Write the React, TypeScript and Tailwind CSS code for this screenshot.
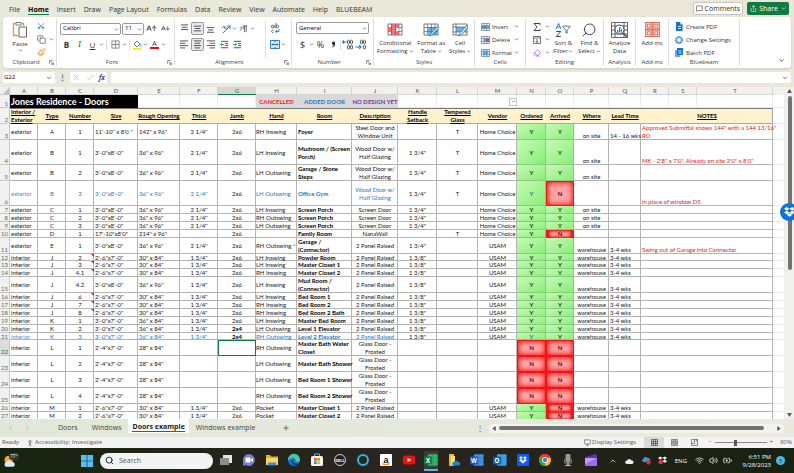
import React, { useState } from 'react';
import {
  AArrowDown, AArrowUp, BatteryCharging, Check, ChevronDown, ChevronLeft, ChevronRight, ChevronUp,
  Copy, Eraser, Funnel, MessageSquare, Monitor, Paintbrush, PersonStanding, Plus, Scissors,
  Search, Share, Volume2, Wifi, X,
} from 'lucide-react';

interface DoorRow {
  n: number;
  size: 'sm' | 'xs' | 'md' | 'lg';
  area: string;
  type: string;
  num: string;
  dim: string;
  opening: string;
  thick: string;
  jamb: string;
  hand: string;
  room: string;
  desc: string;
  setback: string;
  glass: string;
  vendor: string;
  ordered: string;
  arrived: string;
  where: string;
  lead: string;
  notes: string;
  added?: boolean;
  comment?: boolean;
}

const row = (n: number, size: DoorRow['size'], cells: string, flags: Partial<DoorRow> = {}): DoorRow => {
  const [area, type, num, dim, opening, thick, jamb, hand, room, desc, setback, glass, vendor, ordered, arrived, where, lead, notes] = cells.split('|');
  return { n, size, area, type, num, dim, opening, thick, jamb, hand, room, desc, setback, glass, vendor, ordered, arrived, where, lead, notes, ...flags };
};

const rows: DoorRow[] = [
  row(3, 'md', `exterior|A|1|11'-10" x 8'0 "|142" x 96"|2 1/4"|2x6|RH Inswing|Foyer|Steel Door and\nWindow Unit||T|Home Choice|Y|Y|on site|14 - 16 wks|Approved Submittal shows 144" with a 144 13/16"\nRO`),
  row(4, 'lg', `exterior|B|1|3'-0"x8'-0"|36" x 96"|2 1/4"|2x6|LH Inswing|Mudroom / (Screen\nPorch)|Wood Door w/\nHalf Glazing|1 3/4"|T|Home Choice|Y|Y|on site||MK - 2'8" x 7'0", Already on site 3'0" x 8'0"`),
  row(5, 'md', `exterior|B|2|3'-0"x8'-0"|36" x 96"|2 1/4"|2x6|LH Outswing|Garage / Stone\nSteps|Wood Door w/\nHalf Glazing|1 3/4"|T|Home Choice|Y|Y|on site||`),
  row(6, 'lg', `exterior|B|3|3'-0"x8'-0"|36" x 96"|2 1/4"|2x6|LH Outswing|Office Gym|Wood Door w/\nHalf Glazing|1 3/4"|T|Home Choice|Y|N|||in place of window D5`, { added: true }),
  row(7, 'sm', `exterior|C|1|3'-0"x8'-0"|36" x 96"|2 1/4"|2x6|LH Inswing|Screen Porch|Screen Door|1 3/4"||Home Choice|Y|Y|on site||`),
  row(8, 'sm', `exterior|C|2|3'-0"x8'-0"|36" x 96"|2 1/4"|2x6|RH Outswing|Screen Porch|Screen Door|1 3/4"||Home Choice|Y|Y|on site||`),
  row(9, 'sm', `exterior|C|3|3'-0"x8'-0"|36" x 96"|2 1/4"|2x6|LH Outswing|Screen Porch|Screen Door|1 3/4"||Home Choice|Y|Y|on site||`),
  row(10, 'sm', `exterior|D|1|17'-10"x8'0"|214" x 96"||2x6||Family Room|NanaWall||T|Home Choice|Y|N|||`),
  row(11, 'md', `exterior|E|1|3'-0"x8'-0"|36" x 96"|2 1/4"|2x6|RH Outswing|Garage /\n(Connector)|2 Panel Raised|1 3/4"||USAM|Y|Y|warehouse|3-4 wks|Swing out of Garage into Connector`),
  row(12, 'xs', `interior|J|2|2'-6"x7'-0"|30" x 84"|1 3/4"|2x6|LH Inswing|Powder Room|2 Panel Raised|1 3/8"||USAM|Y|Y|warehouse|3-4 wks|`, { comment: true }),
  row(13, 'sm', `interior|J|3|2'-6"x7'-0"|30" x 84"|1 3/4"|2x6|LH Inswing|Master Closet 1|2 Panel Raised|1 3/8"||USAM|Y|Y|warehouse|3-4 wks|`, { comment: true }),
  row(14, 'sm', `interior|J|4.1|2'-6"x7'-0"|30" x 84"|1 3/4"|2x6|RH Inswing|Master Closet 2|2 Panel Raised|1 3/8"||USAM|Y|Y|warehouse|3-4 wks|`, { comment: true }),
  row(15, 'md', `interior|J|4.2|3'-0"x8'-0"|36" x 96"|1 3/4"|2x6|LH Inswing|Mud Room /\n(Connector)|2 Panel Raised|1 3/8"||USAM|Y|Y|warehouse|3-4 wks|`),
  row(16, 'sm', `interior|J|6|2'-6"x7'-0"|30" x 84"|1 3/4"|2x6|LH Inswing|Bed Room 1|2 Panel Raised|1 3/8"||USAM|Y|Y|warehouse|3-4 wks|`, { comment: true }),
  row(17, 'sm', `interior|J|7|2'-6"x7'-0"|30" x 84"|1 3/4"|2x6|RH Inswing|Bed Room 2|2 Panel Raised|1 3/8"||USAM|Y|Y|warehouse|3-4 wks|`, { comment: true }),
  row(18, 'sm', `interior|J|8|2'-6"x7'-0"|30" x 84"|1 3/4"|2x6|RH Inswing|Bed Room 2 Bath|2 Panel Raised|1 3/8"||USAM|Y|Y|warehouse|3-4 wks|`, { comment: true }),
  row(19, 'sm', `interior|K|1|3'-0"x7'-0"|36" x 84"|1 3/4"|2x6|LH Inswing|Master Bed Room|2 Panel Raised|1 3/8"||USAM|Y|Y|warehouse|3-4 wks|`),
  row(20, 'sm', `interior|K|2|3'-0"x7'-0"|36" x 84"|1 3/4"|2x4|LH Outswing|Level 1 Elevator|2 Panel Raised|1 3/8"||USAM|Y|Y|warehouse|3-4 wks|`),
  row(21, 'xs', `interior|K|3|3'-0"x7'-0"|36" x 84"|1 3/4"|2x4|RH Outswing|Level 2 Elevator|2 Panel Raised|1 3/8"||USAM|Y|Y|warehouse|3-4 wks|`, { added: true }),
  row(22, 'md', `interior|L|1|2'-4"x7'-0"|28" x 84"|||RH Outswing|Master Bath Water\nCloset|Glass Door -\nFrosted||||N|N|||`),
  row(23, 'md', `interior|L|2|2'-4"x7'-0"|28" x 84"|||LH Outswing|Master Bath Shower|Glass Door -\nFrosted||||N|N|||`),
  row(24, 'md', `interior|L|3|2'-4"x7'-0"|28" x 84"|||LH Outswing|Bed Room 1 Shower|Glass Door -\nFrosted||||N|N|||`),
  row(25, 'md', `interior|L|4|2'-4"x7'-0"|28" x 84"|||RH Outswing|Bed Room 2 Shower|Glass Door -\nFrosted||||N|N|||`),
  row(26, 'sm', `interior|M|1|2'-6"x7'-0"|30" x 84"|1 3/4"|2x6|Pocket|Master Closet 1|2 Panel Raised|||USAM|Y|N|warehouse|3-4 wks|`),
  row(27, 'sm', `interior|M|2|2'-6"x7'-0"|30" x 84"|1 3/4"|2x6|Pocket|Master Closet 2|2 Panel Raised|||USAM|Y|N|warehouse|3-4 wks|`),
];

const rowSize = {
  xs: 'h-[7px] leading-[7px]',
  sm: 'h-[8px] leading-[8px]',
  md: 'h-[16px] leading-[8px]',
  lg: 'h-[25px] leading-[8px]',
};

const columns: [string, string][] = [
  ['A', 'w-[28px]'], ['B', 'w-[28px]'], ['C', 'w-[28px]'], ['D', 'w-[44px]'], ['E', 'w-[42px]'],
  ['F', 'w-[38px]'], ['G', 'w-[38px]'], ['H', 'w-[41px]'], ['I', 'w-[55px]'], ['J', 'w-[46px]'],
  ['K', 'w-[39px]'], ['L', 'w-[41px]'], ['M', 'w-[39px]'], ['N', 'w-[29px]'], ['O', 'w-[28px]'],
  ['P', 'w-[35px]'], ['Q', 'w-[32px]'], ['R', 'w-[28px]'], ['S', 'w-[28px]'], ['T', 'w-[76px]'],
];

const headings = [
  'Interior /\nExterior', 'Type', 'Number', 'Size', 'Rough Opening', 'Thick', 'Jamb', 'Hand', 'Room', 'Description',
  'Handle\nSetback', 'Tempered\nGlass', 'Vendor', 'Ordered', 'Arrived', 'Where', 'Lead Time',
];

const line = 'shadow-[inset_-1px_-1px_0_#b4b4b4]';
const faint = 'shadow-[inset_-1px_-1px_0_#ececec]';

const Chev = ({ className = '' }: { className?: string }) => (
  <ChevronDown className={`w-[5px] h-[5px] shrink-0 ${className || 'text-gray-700'}`} strokeWidth={3} />
);

const Tool = ({ label, className = '', children }: { label: string; className?: string; children: React.ReactNode }) => (
  <button aria-label={label} className={`flex items-center justify-center shrink-0 h-[13px] w-[13px] rounded-[2px] ${className}`}>
    {children}
  </button>
);

const Picker = ({ label, value, width }: { label: string; value: string; width: string }) => (
  <div className="relative flex">
    <select aria-label={label} className={`appearance-none h-[12px] pl-[2px] text-[6px] leading-[9px] bg-white border border-[#9a9a9a] rounded-[2px] ${width}`}>
      <option>{value}</option>
    </select>
    <ChevronDown className="absolute right-[2px] top-[4px] w-[5px] h-[5px] text-gray-700 pointer-events-none" strokeWidth={3} />
  </div>
);

const Lines = ({ widths, y = 2 }: { widths: number[][]; y?: number }) => (
  <svg viewBox="0 0 10 10" className="w-[9px] h-[9px]" stroke="#444" strokeWidth="1">
    {widths.map(([a, b], i) => <line key={i} x1={a} x2={b} y1={y + i * 2.6} y2={y + i * 2.6} />)}
  </svg>
);

interface GroupProps {
  title: string;
  className: string;
  launcher?: boolean;
  children: React.ReactNode;
}

const Group = ({ title, className, launcher, children }: GroupProps) => (
  <section aria-label={title} className={`flex flex-col shrink-0 border-r border-[#dedede] my-[2px] ${className}`}>
    <div className="flex h-[39px] pt-[2px]">{children}</div>
    <div className="flex items-center h-[8px] text-[6px] leading-[8px] text-[#444]">
      <span className="flex-1 text-center whitespace-nowrap">{title}</span>
      {launcher && (
        <svg viewBox="0 0 8 8" className="w-[5px] h-[5px] mr-[2px]" fill="none" stroke="#444">
          <path d="M1 6V1H6M3 3L7 7M7 4V7H4" />
        </svg>
      )}
    </div>
  </section>
);

const BigButton = ({ icon, a, b, chevron = true }: { icon: React.ReactNode; a: string; b?: string; chevron?: boolean }) => (
  <button className="flex flex-col items-center flex-auto text-[6px] leading-[8px] text-[#333] whitespace-nowrap">
    <span className="flex items-center justify-center h-[17px] mb-[1px]">{icon}</span>
    <span>{a}</span>
    <span className="flex items-center gap-px">{b}{chevron && <Chev />}</span>
  </button>
);

const GridGlyph = ({ red }: { red?: boolean }) => (
  <svg viewBox="0 0 16 14" className="w-[16px] h-[14px]">
    <path d="M1 1H15V12H1Z" fill="#fff" stroke="#555" strokeWidth=".8" />
    {red ? (
      <g fill="#f2707a"><path d="M4 1H12V4H4ZM1 5H9V8H1ZM4 9H12V12H4Z" /></g>
    ) : (
      <path d="M5 4H15V12H5Z" fill="#6bb3ec" />
    )}
    <path d="M1 4.5H15M1 8.5H15M4.5 1V12M8.5 1V12M12 1V12" stroke="#555" strokeWidth=".6" />
    {!red && <path d="M14.5 3L8 10.5L6 13L9 12L15.5 5Z" fill="#cfe6fa" stroke="#2b78b8" strokeWidth=".8" />}
  </svg>
);

const CellStyleGlyph = () => (
  <svg viewBox="0 0 16 14" className="w-[16px] h-[14px]">
    <path d="M1 1H15V12H1Z" fill="#fff" stroke="#555" strokeWidth=".8" />
    <path d="M4 4H15V9H4Z" fill="#6bb3ec" />
    <path d="M1 4H15M1 9H15M4 1V12" stroke="#555" strokeWidth=".7" />
    <path d="M15 2L8.500 9.500L6.500 13L10 11.500L16 4Z" fill="#cfe6fa" stroke="#2b78b8" strokeWidth=".8" />
  </svg>
);

const CellGlyph = ({ kind }: { kind: string }) => (
  <svg viewBox="0 0 10 9" className="w-[9px] h-[8px]">
    <path d="M.5 .5H9.5V8.5H.5ZM.5 3H9.5M.5 6H9.5M3.5 .5V8.5M6.5 .5V8.5" fill="#fff" stroke="#4a6478" strokeWidth=".7" />
    <path d={kind === 'Format' ? 'M2 2H8V7H2Z' : 'M3 3H9V6H3Z'} fill="#55a5e4" />
    {kind === 'Delete' && <path d="M5.5 3L9 6.5M9 3L5.5 6.5" stroke="#d63838" strokeWidth="1.2" />}
    {kind === 'Insert' && <path d="M6 4.5H1M2.6 3L1 4.5L2.6 6" fill="none" stroke="#1668a8" strokeWidth=".9" />}
  </svg>
);

const Indent = ({ flip }: { flip?: boolean }) => (
  <svg viewBox="0 0 10 10" className="w-[9px] h-[9px]" fill="none">
    <path d="M1 1.5H9M5.5 4H9M5.5 6.2H9M1 8.6H9" stroke="#444" />
    <path d={flip ? 'M0 5H4M2.5 3.5L4 5L2.5 6.5' : 'M4.5 5H.5M2 3.5L.5 5L2 6.5'} stroke="#1a7fd0" />
  </svg>
);

// Rounded zeros with an arrow, shared by both decimal buttons
const Decimals = ({ less }: { less?: boolean }) => (
  <svg viewBox="0 0 11 11" className="w-[11px] h-[11px]" fill="none" stroke="#444" strokeWidth=".9">
    <ellipse cx="6.500" cy="3" rx="1.100" ry="1.900" />
    <ellipse cx="9.500" cy="3" rx="1.100" ry="1.900" />
    <ellipse cx="9.500" cy="8.200" rx="1.100" ry="1.900" />
    {!less && <ellipse cx="6.500" cy="8.200" rx="1.100" ry="1.900" />}
    <path d={less ? 'M.5 8H6M4.200 6.200L6 8L4.200 9.800' : 'M4.500 3H.5M2 1.500L.5 3L2 4.500'} stroke="#1a7fd0" strokeWidth="1.100" />
  </svg>
);

const DropboxMark = ({ className }: { className: string }) => (
  <svg viewBox="0 0 24 22" className={className} fill="#fff">
    <path d="M6 0L12 4L6 8L0 4ZM18 0L24 4L18 8L12 4ZM6 8L12 12L6 16L0 12ZM18 8L24 12L18 16L12 12ZM6 17.3L12 13.3L18 17.3L12 21.3Z" />
  </svg>
);

const menu = ['File', 'Home', 'Insert', 'Draw', 'Page Layout', 'Formulas', 'Data', 'Review', 'View', 'Automate', 'Help', 'BLUEBEAM'];

const MenuBar = () => (
  <header className="flex items-center h-[17px] shrink-0 pl-[9px] pr-[5px]">
    <nav className="flex gap-[8px] text-[7px] leading-[9px] text-[#333]">
      {menu.map(m => (
        <button key={m} className={`whitespace-nowrap border-b-[1px] mt-[3px] ${m === 'Home' ? 'font-bold border-[#107c41] text-black' : 'border-transparent'}`}>{m}</button>
      ))}
    </nav>
    <div className="flex gap-[4px] ml-auto text-[7px] leading-[9px]">
      <button className="flex items-center gap-[2px] h-[13px] px-[2px] rounded-[2px] bg-white border border-[#c8c6bd] text-[#333]">
        <MessageSquare className="w-[7px] h-[7px]" /> Comments
      </button>
      <button className="flex items-center gap-[2px] h-[13px] px-[3px] rounded-[2px] bg-[#107c41] text-white">
        <Share className="w-[7px] h-[7px]" /> Share <Chev className="text-white ml-px" />
      </button>
    </div>
  </header>
);

const Ribbon = () => (
  <div className="flex h-[51px] shrink-0 mx-[3px] bg-white rounded-[4px] shadow-sm overflow-hidden">
    <Group title="Clipboard" className="w-[54px]" launcher>
      <button className="flex flex-col items-center w-[34px] text-[6px] leading-[8px] text-[#333]">
        <svg viewBox="0 0 16 17" className="w-[16px] h-[17px]" fill="none">
          <path d="M3.5 2.5H1.5V14.5H6M9.5 2.5H11.5V5" stroke="#e79a3c" strokeWidth="1.4" />
          <path d="M4 1.5H9V4H4Z" fill="#fff" stroke="#666" strokeWidth=".8" />
          <path d="M7 6H14.5V16H7Z" fill="#fff" stroke="#666" strokeWidth="1" />
        </svg>
        <span className="mt-[2px]">Paste</span>
        <Chev />
      </button>
      <div className="flex flex-col justify-between items-start py-px">
        <button aria-label="Cut"><Scissors className="w-[8px] h-[8px] text-[#2f7ab8] -rotate-90" /></button>
        <button aria-label="Copy" className="flex items-center gap-[3px]"><Copy className="w-[9px] h-[9px] text-[#555]" /><Chev /></button>
        <button aria-label="Format Painter"><Paintbrush className="w-[9px] h-[9px] text-[#d9822b]" /></button>
      </div>
    </Group>

    <Group title="Font" className="w-[118px]" launcher>
      <div className="flex flex-col gap-[3px] px-[3px] pt-px">
        <div className="flex items-center gap-px">
          <Picker label="Font name" value="Calibri" width="w-[61px]" />
          <Picker label="Font size" value="11" width="w-[22px]" />
          <Tool label="Increase Font Size"><AArrowUp className="w-[11px] h-[11px] text-[#444]" /></Tool>
          <Tool label="Decrease Font Size"><AArrowDown className="w-[9px] h-[9px] text-[#444]" /></Tool>
        </div>
        <div className="flex items-center text-[8px] text-[#333]">
          <Tool label="Bold" className="font-bold">B</Tool>
          <Tool label="Italic" className="font-serif italic">I</Tool>
          <Tool label="Underline" className="underline">U</Tool>
          <Chev />
          <span className="w-px h-[11px] bg-[#dedede] mx-[2px]" />
          <Tool label="Borders">
            <svg viewBox="0 0 10 10" className="w-[9px] h-[9px]"><path d="M1 1H9V9H1ZM5 1V9M1 5H9" fill="none" stroke="#777" strokeWidth=".9" /></svg>
          </Tool>
          <Chev />
          <span className="w-px h-[11px] bg-[#dedede] ml-[2px]" />
          <Tool label="Fill Color">
            <svg viewBox="0 0 10 10" className="w-[10px] h-[10px]"><path d="M2 4L5 1L8 4L5 7Z" fill="#fff" stroke="#555" strokeWidth=".8" /><path d="M8 4Q9.5 6 8.6 6.6" stroke="#1a7fd0" fill="none" /><path d="M1 8H9V10H1Z" fill="#ffee00" /></svg>
          </Tool>
          <Chev />
          <Tool label="Font Color"><span className="text-[7px] leading-[7px] border-b-2 border-[#e01010] px-[2px]">A</span></Tool>
          <Chev />
        </div>
      </div>
    </Group>

    <Group title="Alignment" className="w-[117px]" launcher>
      <div className="flex flex-col gap-[3px] pl-[3px] pt-px">
        <div className="flex items-center">
          <Tool label="Top Align"><Lines widths={[[1, 9], [2, 8], [1, 9]]} y={1} /></Tool>
          <Tool label="Middle Align" className="bg-[#eaeaea] border border-[#9a9a9a]"><Lines widths={[[1, 9], [2, 8], [1, 9]]} y={2.4} /></Tool>
          <Tool label="Bottom Align"><Lines widths={[[1, 9], [2, 8], [1, 9]]} y={4} /></Tool>
          <Tool label="Orientation" className="ml-[2px]">
            <svg viewBox="0 0 10 10" className="w-[10px] h-[10px]" fill="none"><path d="M2 9L9 2M9 5V2H6" stroke="#1a7fd0" /><path d="M1 4L3 2L4 5M4.5 2.5L6 5" stroke="#555" strokeWidth=".8" /></svg>
          </Tool>
          <Chev />
          <Tool label="Text Direction">
            <svg viewBox="0 0 10 10" className="w-[9px] h-[9px]" fill="none"><path d="M1 3L3.5 5L1 7" stroke="#1a7fd0" /><path d="M6 9V2H9M8 2V9M6 5Q4 5 4.5 3T6 2" stroke="#444" strokeWidth=".9" /></svg>
          </Tool>
          <Chev />
        </div>
        <div className="flex items-center">
          <Tool label="Align Left"><Lines widths={[[0, 9], [0, 6], [0, 9], [0, 6]]} y={1} /></Tool>
          <Tool label="Center" className="bg-[#eaeaea] border border-[#9a9a9a]"><Lines widths={[[1, 9], [2, 8], [1, 9], [2, 8]]} y={1} /></Tool>
          <Tool label="Align Right"><Lines widths={[[1, 10], [4, 10], [1, 10], [4, 10]]} y={1} /></Tool>
          <Tool label="Decrease Indent" className="ml-px"><Indent /></Tool>
          <Tool label="Increase Indent"><Indent flip /></Tool>
        </div>
      </div>
      <div className="flex flex-col gap-[3px] ml-auto mr-[5px] pl-[2px] pt-px border-l border-[#dedede]">
        <Tool label="Wrap Text">
          <svg viewBox="0 0 10 11" className="w-[10px] h-[11px]" fill="none">
            <circle cx="2.500" cy="3.500" r="1.300" stroke="#444" strokeWidth=".8" />
            <path d="M4 2V5M6 0V5" stroke="#444" strokeWidth=".8" />
            <circle cx="7.300" cy="3.500" r="1.300" stroke="#444" strokeWidth=".8" />
            <path d="M3.500 7.200A1.300 1.300 0 1 0 3.500 9.500" stroke="#444" strokeWidth=".8" />
            <path d="M9 6V8.500H5.500M7 7L5.500 8.500L7 10" stroke="#1a7fd0" strokeWidth=".9" />
          </svg>
        </Tool>
        <div className="flex items-center">
          <Tool label="Merge & Center">
            <svg viewBox="0 0 10 9" className="w-[10px] h-[9px]"><path d="M.5 .5H9.5V8.5H.5Z" fill="#d5e9f9" stroke="#3a80b8" /><path d="M5 0V2M5 7V9M2 4.5H8M3 3.5L2 4.5L3 5.5M7 3.5L8 4.5L7 5.5" fill="none" stroke="#1668a8" strokeWidth=".9" /></svg>
          </Tool>
          <Chev />
        </div>
      </div>
    </Group>

    <Group title="Number" className="w-[82px]" launcher>
      <div className="flex flex-col gap-[4px] px-[4px] pt-px">
        <Picker label="Number format" value="General" width="w-[73px]" />
        <div className="flex items-center text-[9px] leading-[12px] text-[#333]">
          <Tool label="Accounting Format">$</Tool>
          <Chev />
          <Tool label="Percent Style">%</Tool>
          <Tool label="Comma Style">
            <svg viewBox="0 0 6 8" className="w-[5px] h-[7px]" fill="#333"><path d="M3 .5A2 2 0 0 1 5 3C5 5.500 3.500 7 1.500 7.500L1.200 6.800C2.500 6.200 3 5.500 3 4.500A2 2 0 1 1 3 .5Z" /></svg>
          </Tool>
          <span className="w-px h-[11px] bg-[#dedede]" />
          <Tool label="Increase Decimal"><Decimals /></Tool>
          <Tool label="Decrease Decimal"><Decimals less /></Tool>
        </div>
      </div>
    </Group>

    <Group title="Styles" className="w-[101px]">
      <div className="flex flex-1 px-px">
        <BigButton icon={<GridGlyph red />} a="Conditional" b="Formatting" />
        <BigButton icon={<GridGlyph />} a="Format as" b="Table" />
        <BigButton icon={<CellStyleGlyph />} a="Cell" b="Styles" />
      </div>
    </Group>

    <Group title="Cells" className="w-[51px]">
      <div className="flex flex-col justify-between flex-1 pl-[6px] pr-[6px] text-[6px] leading-[8px] text-[#333]">
        {['Insert', 'Delete', 'Format'].map(c => (
          <button key={c} className="flex items-center gap-[2px] h-[11px]"><CellGlyph kind={c} />{c}<Chev className="ml-auto text-gray-700" /></button>
        ))}
      </div>
    </Group>

    <Group title="Editing" className="w-[78px]">
      <div className="flex flex-col justify-between w-[25px] pl-[7px] text-[#444]">
        <button aria-label="AutoSum" className="flex items-center gap-[4px] h-[11px]">
          <svg viewBox="0 0 8 8" className="w-[8px] h-[8px]" fill="none" stroke="#444"><path d="M7 2V.5H1L4 4L1 7.5H7V6" /></svg><Chev />
        </button>
        <button aria-label="Fill" className="flex items-center gap-[4px] h-[11px]">
          <svg viewBox="0 0 8 8" className="w-[8px] h-[8px]" fill="none"><path d="M.5 .5H7.5V7.5H.5ZM.5 2H7.5" stroke="#555" strokeWidth=".8" /><path d="M4 3V6.5M2.6 5L4 6.5L5.4 5" stroke="#1a7fd0" /></svg><Chev />
        </button>
        <button aria-label="Clear" className="flex items-center gap-[4px] h-[11px]"><Eraser className="w-[8px] h-[8px] text-[#a04fb8]" /><Chev /></button>
      </div>
      <BigButton
        icon={
          <>
            <svg viewBox="0 0 7 14" className="w-[7px] h-[14px]" fill="none">
              <path d="M1 6L3.500 .5L6 6M2 4H5" stroke="#1a7fd0" />
              <path d="M1.200 8.500H5.800L1.200 13.500H5.800" stroke="#444" />
            </svg>
            <Funnel className="w-[9px] h-[9px] text-[#444]" />
          </>
        }
        a="Sort &" b="Filter"
      />
      <BigButton icon={<Search className="w-[16px] h-[16px] text-[#444] -scale-x-100" strokeWidth={1.5} />} a="Find &" b="Select" />
    </Group>

    <Group title="Analysis" className="w-[32px]">
      <BigButton
        icon={<svg viewBox="0 0 17 16" className="w-[17px] h-[16px]" fill="none"><path d="M.5 .5H16.5V15.5H.5ZM.5 4H16.5M.5 8H16.5M.5 12H16.5M4 .5V15.5M13 .5V15.5" stroke="#555" strokeWidth=".9" /><circle cx="8.5" cy="7.5" r="4.5" fill="#fff" stroke="#444" /><path d="M6 8H7.5V10.5H6ZM8 5H9.5V10.5H8ZM10 7H11V10.5H10Z" fill="#2a8ad8" /><path d="M12 11L16 15" stroke="#444" strokeWidth="1.2" /></svg>}
        a="Analyze" b="Data" chevron={false}
      />
    </Group>

    <Group title="Add-ins" className="w-[33px]">
      <BigButton
        icon={<svg viewBox="0 0 16 16" className="w-[15px] h-[15px]" fill="#fbe3dd" stroke="#e0705c" strokeWidth="1.1"><path d="M.6 .6H7.4V7.4H.6ZM8.6 .6H15.4V7.4H8.6ZM.6 8.6H7.4V15.4H.6ZM8.6 8.6H15.4V15.4H8.6Z" /><path d="M2.5 2.5H5.5V5.5H2.5ZM10.5 2.5H13.5V5.5H10.5ZM2.5 10.5H5.5V13.5H2.5ZM10.5 10.5H13.5V13.5H10.5Z" fill="#fff" /></svg>}
        a="Add-ins" chevron={false}
      />
    </Group>

    <Group title="Bluebeam" className="w-[71px]">
      <div className="flex flex-col justify-between flex-1 pl-[6px] text-[6px] leading-[8px] text-[#333] whitespace-nowrap">
        <button className="flex items-center gap-[3px] h-[11px]">
          <svg viewBox="0 0 8 9" className="w-[8px] h-[9px]"><path d="M1 0H5L7.5 2.5V9H1Z" fill="#0a78d0" /><path d="M5 0V2.5H7.5" fill="#a8d4f5" /><path d="M3 4.5H6M3 6.5H6" stroke="#fff" strokeWidth=".8" /></svg>Create PDF
        </button>
        <button className="flex items-center gap-[3px] h-[11px]">
          <svg viewBox="0 0 8 8" className="w-[8px] h-[8px]"><circle cx="4" cy="4" r="3.3" fill="#fff" stroke="#2a8ee0" strokeWidth="1.3" strokeDasharray="1.7 .4" /><circle cx="4" cy="4" r="2.4" fill="none" stroke="#2a8ee0" strokeWidth=".8" /></svg>Change Settings
        </button>
        <button className="flex items-center gap-[3px] h-[11px]">
          <svg viewBox="0 0 8 9" className="w-[8px] h-[9px]"><path d="M0 2H5V9H0Z" fill="#5db0ef" /><path d="M2 0H8V7H2Z" fill="#0a78d0" /><path d="M3.5 3H6.5M3.5 5H6.5" stroke="#fff" strokeWidth=".8" /></svg>Batch PDF
        </button>
      </div>
    </Group>
    <button aria-label="Collapse ribbon" className="ml-auto mt-auto mb-[4px] mr-[6px]"><ChevronDown className="w-[7px] h-[7px] text-[#444]" strokeWidth={3} /></button>
  </div>
);

const FormulaBar = () => (
  <div className="flex items-center shrink-0 h-[11px] my-[4px] mx-[3px] gap-[4px]">
    <div className="flex items-center w-[52px] h-full bg-white rounded-[2px]">
      <input aria-label="Name box" defaultValue="G22" className="w-[40px] pl-px text-[6px] leading-[9px] outline-none text-black" />
      <ChevronDown className="w-[6px] h-[6px] ml-[3px] text-[#444]" strokeWidth={3} />
    </div>
    <span className="text-[7px] leading-[8px] font-bold text-[#555]">⋮</span>
    <div className="flex items-center justify-around w-[37px] h-full bg-white rounded-[2px]">
      <button aria-label="Cancel"><X className="w-[9px] h-[9px] text-[#bbb]" /></button>
      <button aria-label="Enter"><Check className="w-[9px] h-[9px] text-[#bbb]" /></button>
      <button aria-label="Insert function" className="font-serif italic text-[8px] leading-[9px] text-black">fx</button>
    </div>
    <div className="flex items-center flex-1 h-full bg-white rounded-[2px] pr-[3px]">
      <input aria-label="Formula" className="flex-1 h-full text-[6px] px-[2px] outline-none" />
      <ChevronDown className="w-[6px] h-[6px] text-[#444]" strokeWidth={3} />
    </div>
  </div>
);

const Status = ({ value, added, short }: { value: string; added?: boolean; short?: boolean }) => {
  if (value === 'N') {
    return (
      <td className={`text-center font-bold text-[#4a0c0c] bg-[#ffa4a4] ${short ? 'shadow-[inset_0_0_3px_1px_#f51414,inset_4px_0_3px_0_#f51414,inset_-4px_0_3px_0_#f51414]' : 'shadow-[inset_0_0_5px_2px_#f51414,inset_0_0_0_1px_#f51414]'}`}>
        {value}
      </td>
    );
  }
  return (
    <td className={`text-center font-bold bg-linear-to-br from-[#c4fab8] to-[#84ee70] shadow-[inset_-1px_-1px_0_#8cc882] ${added ? 'text-[#1f7a9c]' : 'text-[#173d12]'}`}>
      {value}
    </td>
  );
};

const SheetRow = ({ r }: { r: DoorRow }) => {
  const ink = r.added ? 'text-[#1f78c4]' : '';
  const active = r.n === 22;
  const short = r.size === 'sm' || r.size === 'xs';
  return (
    <tr className={`whitespace-pre ${rowSize[r.size]}`}>
      <th scope="row" className={`font-normal text-right align-bottom pr-[2px] shadow-[inset_-1px_-1px_0_#c8c8c8] ${active ? 'bg-[#dcdcdc] text-[#107c41]' : 'bg-[#f1f1f1] text-[#666]'}`}>{r.n}</th>
      <td className={`pl-px ${line} ${r.added ? 'text-[#5d83d8]' : ''}`}>{r.area}</td>
      <td className={`text-center ${line} ${ink}`}>{r.type}</td>
      <td className={`relative text-center ${line} ${ink}`}>
        {r.num}
        {r.comment && <svg viewBox="0 0 3 3" className="absolute right-0 top-0 w-[3px] h-[3px]" fill="#d81010"><path d="M0 0H3V3Z" /></svg>}
      </td>
      <td className={`pl-px ${line} ${ink}`}>{r.dim}</td>
      <td className={`pl-px ${line} ${ink}`}>{r.opening}</td>
      <td className={`text-center ${line} ${ink}`}>{r.thick}</td>
      <td className={`text-center ${active ? 'shadow-[inset_0_0_0_1px_#107c41]' : line} ${r.jamb === '2x4' ? 'font-bold text-black' : ''}`}>{r.jamb}</td>
      <td className={`${line} ${ink}`}>{r.hand}{r.n === 11 && <span className="text-red-600"> *</span>}</td>
      <td className={`pl-px font-bold ${line} ${ink || 'text-black'}`}>{r.room}</td>
      <td className={`text-center ${line} ${ink}`}>{r.desc}</td>
      <td className={`text-center ${line}`}>{r.setback}</td>
      <td className={`text-center ${line}`}>{r.glass}</td>
      <td className={`text-center ${line}`}>{r.vendor}</td>
      <Status value={r.ordered} added={r.added} short={short} />
      <Status value={r.arrived} short={short} />
      <td className={`text-center align-bottom ${line}`}>{r.where}</td>
      <td className={`pl-px align-bottom ${line}`}>{r.lead}</td>
      <td colSpan={3} className={`pl-px align-bottom text-[#e82020] ${line}`}>{r.notes}</td>
      <td className={faint} />
    </tr>
  );
};

const Sheet = () => (
  <div className="flex flex-1 min-h-0 overflow-hidden bg-white">
    <table className="flex-1 w-full table-fixed border-separate border-spacing-0 font-['Lato',sans-serif] text-[6px] leading-[8px] text-[#161616] self-start">
      <colgroup>
        <col className="w-[10px]" />
        {columns.map(([c, w]) => <col key={c} className={w} />)}
        <col />
      </colgroup>
      <thead>
        <tr className="h-[8px] bg-[#f1f1f1] text-[#555]">
          <td className="shadow-[inset_-1px_-1px_0_#c8c8c8]">
            <svg viewBox="0 0 8 8" className="w-[6px] h-[6px] ml-auto mr-px" fill="#c0c0c0"><path d="M8 0V8H0Z" /></svg>
          </td>
          {columns.map(([c]) => (
            <th key={c} scope="col" className={`font-normal ${c === 'G' ? 'bg-[#d6d6d6] text-[#107c41] shadow-[inset_0_-1px_0_#107c41]' : 'shadow-[inset_-1px_-1px_0_#d4d4d4]'}`}>{c}</th>
          ))}
          <th />
        </tr>
      </thead>
      <tbody>
        <tr className="h-[13px] whitespace-nowrap">
          <th scope="row" className="font-normal text-right align-bottom pr-[2px] bg-[#f1f1f1] text-[#666] shadow-[inset_-1px_-1px_0_#c8c8c8]">1</th>
          <td colSpan={4} className="pl-px bg-black text-white font-bold text-[9px] leading-[13px]">Jones Residence - Doors</td>
          <td className={faint} /><td className={faint} /><td className={faint} />
          <td className="text-center font-bold bg-[#d9d9d9] text-[#f01818]">CANCELLED</td>
          <td className="text-center font-bold bg-[#d9d9d9] text-[#1f78c4]">ADDED DOOR</td>
          <td className="text-center font-bold bg-[#d9d9d9] text-[#7a35a8]">NO DESIGN YET</td>
          <td className={faint} /><td className={faint} />
          <td className={faint}>
            <button aria-label="Filter vendor" className="flex items-center justify-center w-[8px] h-[8px] ml-auto bg-white border border-[#c4c4c4]"><Chev /></button>
          </td>
          <td className={faint} /><td className={faint} /><td className={faint} /><td className={faint} />
          <td className={faint} /><td className={faint} /><td className={faint} /><td className={faint} />
        </tr>
        <tr className="h-[16px] whitespace-pre bg-[#fff2cc] text-black">
          <th scope="row" className="font-normal text-right align-bottom pr-[2px] bg-[#f1f1f1] text-[#666] shadow-[inset_-1px_-1px_0_#c8c8c8]">2</th>
          {headings.map((h, i) => (
            <th key={h} className={`font-bold underline shadow-[inset_0_1px_0_#777,inset_0_-1px_0_#aaa] ${i === 0 ? 'text-left pl-px' : 'text-center'}`}>{h}</th>
          ))}
          <th colSpan={3} className="font-bold underline text-center shadow-[inset_0_1px_0_#777,inset_-1px_-1px_0_#aaa]">NOTES</th>
          <td className={`bg-white ${faint}`} />
        </tr>
        {rows.map(r => <SheetRow key={r.n} r={r} />)}
      </tbody>
    </table>
    <div className="flex flex-col items-center w-[9px] shrink-0 pt-[2px] pb-[2px] bg-[#f0f0ee]">
      <svg viewBox="0 0 6 5" className="w-[5px] h-[4px] mb-[3px]" fill="#555"><path d="M3 0L6 5H0Z" /></svg>
      <div className="w-[4px] h-[53%] rounded-full bg-[#737373]" />
      <svg viewBox="0 0 6 5" className="w-[5px] h-[4px] mt-auto" fill="#555"><path d="M0 0H6L3 5Z" /></svg>
    </div>
  </div>
);

const SheetTabs = () => {
  const [active, setActive] = useState('Doors example');
  return (
    <div className="flex items-center shrink-0 h-[18px] text-[7px] leading-[9px] text-[#444] bg-linear-to-r from-[#e0e9d9] to-[#ebe8e0]">
      <ChevronLeft className="w-[7px] h-[7px] ml-[7px] text-[#999]" />
      <ChevronRight className="w-[7px] h-[7px] ml-[10px] mr-[20px] text-[#999]" />
      {['Doors', 'Windows', 'Doors example', 'Windows example'].map(t => (
        <button
          key={t}
          onClick={() => setActive(t)}
          className={`h-[14px] mb-[4px] whitespace-nowrap ${t === active ? 'px-[4px] bg-white font-bold text-[#222]' : 'px-[7px] pt-[3px]'}`}
        >
          <span className={t === active ? 'border-b border-[#107c41]' : ''}>{t}</span>
        </button>
      ))}
      <button aria-label="New sheet" className="ml-[20px]"><Plus className="w-[8px] h-[8px]" /></button>
      <div className="flex items-center gap-[5px] ml-auto w-[40%] pr-[10px]">
        <span className="text-[8px] leading-[8px]">⋮</span>
        <div className="flex items-center flex-1 gap-[3px] px-[3px] h-[9px] rounded-full bg-[#f4f3f0]">
          <svg viewBox="0 0 4 6" className="w-[4px] h-[5px]" fill="#555"><path d="M4 0V6L0 3Z" /></svg>
          <div className="flex-1 h-[4px] mr-[10px] rounded-full bg-[#737373]" />
          <svg viewBox="0 0 4 6" className="w-[4px] h-[5px]" fill="#555"><path d="M0 0V6L4 3Z" /></svg>
        </div>
      </div>
    </div>
  );
};

const StatusBar = () => (
  <div className="flex items-center shrink-0 h-[11px] px-[2px] bg-[#f3f3f3] text-[6px] leading-[9px] text-[#555]">
    <span>Ready</span>
    <PersonStanding className="w-[8px] h-[8px] ml-[7px] mr-px" />
    <span>Accessibility: Investigate</span>
    <button className="flex items-center gap-px ml-auto mr-[8px]"><Monitor className="w-[7px] h-[7px]" />Display Settings</button>
    <button aria-label="Normal view" className="flex items-center justify-center w-[20px] h-full bg-[#dadada]">
      <svg viewBox="0 0 8 8" className="w-[7px] h-[7px]"><path d="M.5 .5H7.5V7.5H.5ZM.5 3H7.5M.5 5.2H7.5M2.8 .5V7.5M5.2 .5V7.5" fill="none" stroke="#444" strokeWidth=".8" /></svg>
    </button>
    <button aria-label="Page layout view" className="flex items-center justify-center w-[20px] h-full">
      <svg viewBox="0 0 8 8" className="w-[7px] h-[7px]"><path d="M.5 .5H7.5V7.5H.5ZM2 2H6V6H2ZM2 3.3H6M2 4.7H6" fill="none" stroke="#555" strokeWidth=".8" /></svg>
    </button>
    <button aria-label="Page break view" className="flex items-center justify-center w-[20px] h-full">
      <svg viewBox="0 0 8 8" className="w-[7px] h-[7px]"><path d="M.5 .5H7.5V7.5H.5ZM.5 5H4V.5M6 .5V3" fill="none" stroke="#555" strokeWidth=".8" /></svg>
    </button>
    <span className="ml-[4px]">−</span>
    <input type="range" aria-label="Zoom" min={10} max={150} defaultValue={66} className="appearance-none w-[52px] h-[7px] mx-[3px] bg-[linear-gradient(#888,#888)] bg-no-repeat bg-center bg-size-[100%_1px] [&::-webkit-slider-thumb]:appearance-none [&::-webkit-slider-thumb]:w-[3px] [&::-webkit-slider-thumb]:h-[6px] [&::-webkit-slider-thumb]:bg-[#555]" />
    <span>+</span>
    <span className="w-[19px] text-right">80%</span>
  </div>
);

const OfficeTile = ({ letter, dark, light }: { letter: string; dark: string; light: string }) => (
  <svg viewBox="0 0 16 16" className="w-[14px] h-[14px]">
    <rect x="4.5" y="1.5" width="11" height="13" rx="1" fill={light} />
    <path d="M4.500 5.800H15.500M4.500 10.200H15.500M10 1.500V14.500" stroke={dark} strokeWidth=".5" opacity=".6" />
    <rect x="0" y="4" width="9" height="9" rx="1" fill={dark} />
    <text x="4.500" y="11" fontSize="7" fontWeight="bold" textAnchor="middle" fill="#fff">{letter}</text>
  </svg>
);

const taskIcons: [string, React.ReactNode][] = [
  ['Task View', <svg viewBox="0 0 14 14" className="w-[14px] h-[14px]"><rect x="4" y="2" width="9" height="8" fill="#e4e4e4" /><rect x="1" y="5" width="9" height="7" fill="#8e8e8e" /></svg>],
  ['Chat', <svg viewBox="0 0 14 14" className="w-[14px] h-[14px]"><path d="M7 1A6 6 0 1 1 3.500 12L1 13V7A6 6 0 0 1 7 1Z" fill="#7b7ddb" /><rect x="3.500" y="4.500" width="5" height="5" rx="1" fill="#fff" /><path d="M9 6.500L11 5V9L9 7.500Z" fill="#fff" /></svg>],
  ['File Explorer', <svg viewBox="0 0 14 14" className="w-[14px] h-[14px]"><path d="M1 2H5L6.500 3.500H13V12H1Z" fill="#e8a82a" /><path d="M1 5H13V12H1Z" fill="#fcd462" /><path d="M3 9.500H11V12.500H3Z" fill="#2f8fe0" /></svg>],
  ['Edge', <svg viewBox="0 0 14 14" className="w-[14px] h-[14px]"><circle cx="7" cy="7" r="6" fill="#1573c9" /><path d="M1 7A6 6 0 0 1 13 6.500C13 9 9.500 9.500 8.500 8.500C9.500 6 7 4.500 5 5.200C3 6 1.500 7 1 7Z" fill="#46cf8a" /><path d="M1.200 6C3 3.500 7 3 8.800 6.200" fill="none" stroke="#36b8e6" strokeWidth="1.500" /><path d="M5.300 7.500C4.500 10 7 12 11 11" stroke="#0b3f8f" strokeWidth="1.500" fill="none" /></svg>],
  ['Store', <svg viewBox="0 0 14 14" className="w-[14px] h-[14px]"><path d="M4.500 3V1H9.500V3" fill="none" stroke="#5ab4ec" /><rect x="1" y="3" width="12" height="10" rx="1.500" fill="#f2f2f2" /><path d="M4 5H6.700V7.700H4Z" fill="#f25022" /><path d="M7.300 5H10V7.700H7.300Z" fill="#7fba00" /><path d="M4 8.300H6.700V11H4Z" fill="#00a4ef" /><path d="M7.300 8.300H10V11H7.300Z" fill="#ffb900" /></svg>],
  ['Dell', <svg viewBox="0 0 14 14" className="w-[14px] h-[14px]"><circle cx="7" cy="7" r="5.500" fill="#222" stroke="#ddd" strokeWidth=".9" /><text x="7" y="8.500" fontSize="4" fontWeight="bold" textAnchor="middle" fill="#fff">DELL</text></svg>],
  ['Alexa', <svg viewBox="0 0 14 14" className="w-[14px] h-[14px]"><circle cx="7" cy="7" r="5" fill="none" stroke="#27b9e8" strokeWidth="2" /><path d="M5.500 11.500L7 13L7.500 11Z" fill="#27b9e8" /></svg>],
  ['Amazon', <svg viewBox="0 0 14 14" className="w-[14px] h-[14px]"><rect x="1" y="1" width="12" height="12" rx="1" fill="#fff" /><text x="7" y="9.500" fontSize="9" fontWeight="bold" textAnchor="middle" fill="#111" className="font-['Liberation_Sans',sans-serif]">a</text><path d="M3 10.500Q7 13 11 10.500" fill="none" stroke="#f39a1e" strokeWidth="1.100" /></svg>],
  ['YouTube', <svg viewBox="0 0 14 14" className="w-[14px] h-[14px]"><rect x="1" y="2.500" width="12" height="9" rx="2" fill="#f00f0f" /><path d="M5.500 5L9.500 7L5.500 9Z" fill="#fff" /></svg>],
  ['Excel', <OfficeTile letter="X" dark="#107c41" light="#2fb673" />],
  ['OneDrive folder', <svg viewBox="0 0 14 14" className="w-[14px] h-[14px]"><path d="M2 1H7V13H2Z" fill="#e8b63a" /><path d="M4 3H8V12H4Z" fill="#fbe08a" /><path d="M6 12.500A2 2 0 0 1 6.500 9A3 3 0 0 1 11.500 9A1.800 1.800 0 0 1 12 12.500Z" fill="#1d83d8" /></svg>],
  ['Word', <OfficeTile letter="W" dark="#185abd" light="#3f93e6" />],
  ['Outlook', <OfficeTile letter="O" dark="#0f5fb0" light="#37a3ea" />],
  ['Dropbox', <span className="flex items-center justify-center w-[12px] h-[12px] bg-[#0a5cff]"><DropboxMark className="w-[8px] h-[8px]" /></span>],
  ['Chrome', <svg viewBox="0 0 14 14" className="w-[14px] h-[14px]"><circle cx="7" cy="7" r="6" fill="#fbc116" /><path d="M7 7L1.800 4A6 6 0 0 1 12.200 4Z" fill="#e33b2e" /><path d="M7 7L1.800 4A6 6 0 0 0 7 13Z" fill="#23a455" /><circle cx="7" cy="7" r="2.900" fill="#fff" /><circle cx="7" cy="7" r="2.200" fill="#3d7df0" /></svg>],
  ['Recorder', <svg viewBox="0 0 14 14" className="w-[14px] h-[14px]"><rect x="4.500" y="1" width="5" height="8" rx="1" fill="#9a9a9a" /><path d="M3 6H4V9H10V6H11V10.500H3Z" fill="#6d6d6d" /><path d="M6 10H8V12H10V13H4V12H6Z" fill="#b8b8b8" /></svg>],
  ['Clipchamp', <svg viewBox="0 0 14 14" className="w-[14px] h-[14px]"><path d="M1 4L12 1L13 3V6H1Z" fill="#5a35c4" /><path d="M1 5H13V13H1Z" fill="#9a6cf0" /><path d="M1 5H13L1 11Z" fill="#c39afa" /></svg>],
];

const Taskbar = () => (
  <footer className="flex items-center shrink-0 h-[25px] pl-[3px] pr-[9px] bg-linear-to-r from-[#16240f] via-[#2c2420] to-[#17210f] text-white">
    <button aria-label="Weather" className="relative w-[18px] h-[16px]">
      <svg viewBox="0 0 16 14" className="w-[15px] h-[14px]"><circle cx="6" cy="6" r="4.500" fill="#f6a32c" /><path d="M3 13A2.500 2.500 0 0 1 3 8.500A4 4 0 0 1 10 8A2.600 2.600 0 0 1 11 13Z" fill="#dbe9f7" /></svg>
      <span className="absolute left-[6px] top-0 px-px rounded-full bg-[#333] text-[5px] leading-[7px]">77°</span>
    </button>
    <button aria-label="Start" className="ml-[60px]">
      <svg viewBox="0 0 12 12" className="w-[12px] h-[12px]" fill="#52c1f5"><path d="M0 0H5.700V5.700H0ZM6.300 0H12V5.700H6.300ZM0 6.300H5.700V12H0ZM6.300 6.300H12V12H6.300Z" /></svg>
    </button>
    <label className="flex items-center gap-[5px] w-[113px] h-[16px] ml-[7px] pl-[5px] rounded-full bg-[#f3f3f3]">
      <Search className="w-[9px] h-[9px] text-[#222]" strokeWidth={2.5} />
      <input aria-label="Search" placeholder="Search" className="w-[80px] text-[7px] leading-[10px] outline-none placeholder:text-[#555]" />
    </label>
    <div className="flex items-center justify-between w-[379px] ml-[6px]">
      {taskIcons.map(([name, icon]) => (
        <button key={name} aria-label={name} className={`flex items-center justify-center w-[14px] h-[20px] border-b-2 ${name === 'Excel' ? 'bg-white/10 border-[#5cb8f0]' : 'border-transparent'}`}>{icon}</button>
      ))}
    </div>
    <div className="flex items-center ml-auto gap-[5px] text-[6px] leading-[8px]">
      <ChevronUp className="w-[8px] h-[8px] mr-[3px]" />
      <svg viewBox="0 0 10 7" className="w-[9px] h-[6px] mr-[2px]" fill="#eee"><path d="M2 7A2 2 0 0 1 2 3A3 3 0 0 1 7.500 3A2 2 0 0 1 8 7Z" /></svg>
      <svg viewBox="0 0 10 9" className="w-[10px] h-[9px] mr-[2px]"><path d="M2 6A2 2 0 0 1 2 3A3 3 0 0 1 7 2A2 2 0 0 1 7.500 6Z" fill="#3a94e0" /><circle cx="7.500" cy="6.500" r="2.300" fill="#e02a2a" /></svg>
      <svg viewBox="0 0 10 9" className="w-[9px] h-[9px]"><path d="M2.500 0L5 1.800L2.500 3.500L0 1.800ZM7.500 0L10 1.800L7.500 3.500L5 1.800ZM7.500 3.500L10 5.300L7.500 7L5 5.300Z" fill="#fff" /><circle cx="3" cy="6.200" r="2.600" fill="#e0304a" /></svg>
      <span className="mx-[3px]">ENG</span>
      <Wifi className="w-[9px] h-[9px]" />
      <Volume2 className="w-[9px] h-[9px]" />
      <BatteryCharging className="w-[9px] h-[9px]" />
      <div className="w-[34px] text-right">6:51 PM<br />9/28/2023</div>
      <span className="flex items-center justify-center w-[9px] h-[9px] rounded-full bg-[#4cb9ea] text-[#10303c]">3</span>
    </div>
  </footer>
);

export default function App() {
  return (
    <div className="relative flex flex-col h-screen overflow-hidden bg-linear-to-r from-[#e7eadc] to-[#ece6da] font-['Open_Sans',sans-serif]">
      <MenuBar />
      <Ribbon />
      <FormulaBar />
      <Sheet />
      <SheetTabs />
      <StatusBar />
      <Taskbar />
      {/* Dropbox badge floats over the scroll bar */}
      <button aria-label="Dropbox badge" className="absolute -right-[4px] top-[203px] flex items-center justify-center w-[18px] h-[18px] rounded-full bg-[#0a74e0]">
        <DropboxMark className="w-[11px] h-[10px]" />
      </button>
    </div>
  );
}
